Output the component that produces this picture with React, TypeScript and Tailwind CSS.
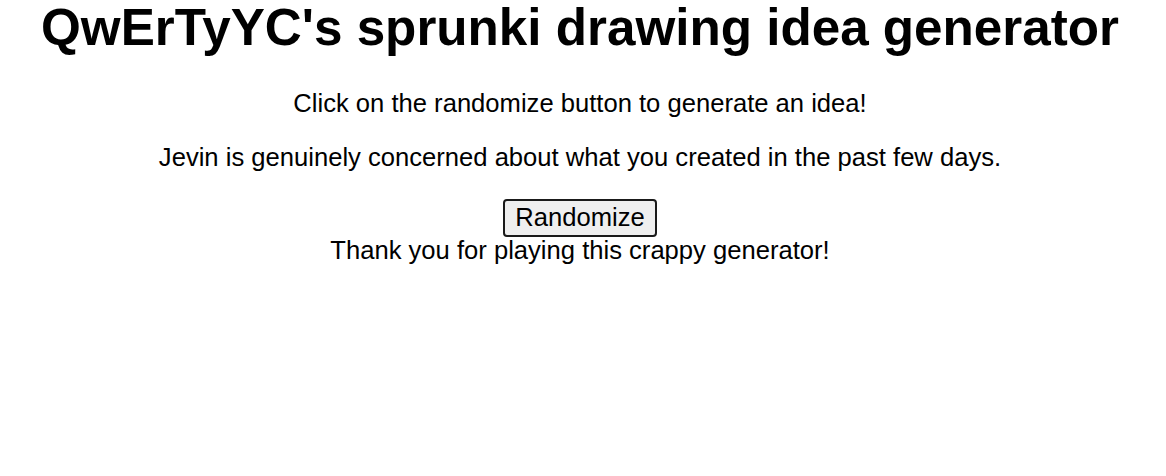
export default function App() {
  return (
    <div className="w-[1166px] h-[476px] bg-white text-black">
      <div className="w-[1160px] text-center" style={{ fontFamily: '"Liberation Sans", Arial, sans-serif' }}>
        <h1 className="text-[51.2px] font-bold leading-[55px]">QwErTyYC's sprunki drawing idea generator</h1>
        <p className="text-[25.6px] leading-[29px] mt-[34px]">Click on the randomize button to generate an idea!</p>
        <p className="text-[25.6px] leading-[29px] mt-[25px]">Jevin is genuinely concerned about what you created in the past few days.</p>
        <div className="mt-[27px] flex justify-center">
          <button className="text-[25.6px] leading-[29px] h-[38px] w-[154px] pb-[2px] border-2 border-[#1a1a1a] rounded-[4px] bg-[#efefef] flex items-center justify-center">Randomize</button>
        </div>
        <p className="text-[25.6px] leading-[28px] -mt-px">Thank you for playing this crappy generator!</p>
      </div>
    </div>
  );
}
